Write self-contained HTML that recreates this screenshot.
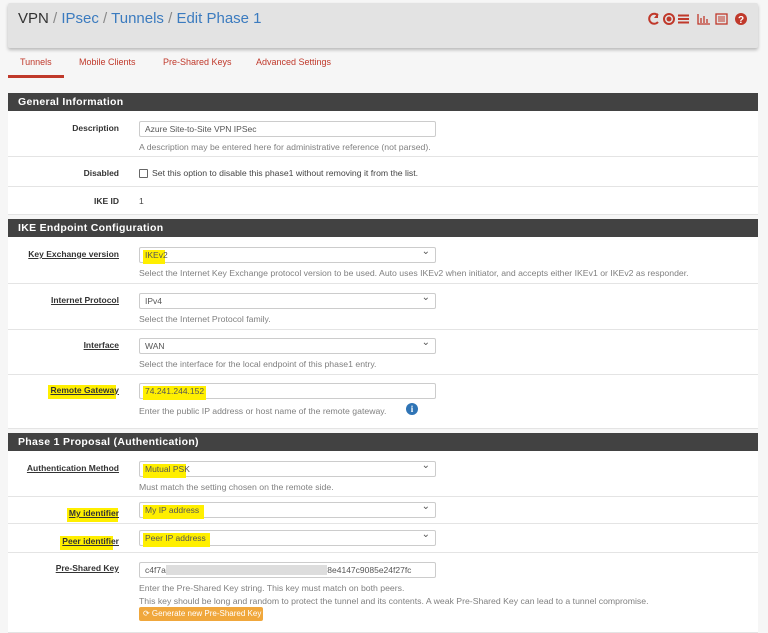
<!DOCTYPE html>
<html><head><meta charset="utf-8"><style>
*{box-sizing:border-box;margin:0;padding:0}
body{width:768px;height:622px;overflow:hidden;background:#f6f6f6;font-family:"Liberation Sans",sans-serif;position:relative;font-size:9px;color:#222}
.a{position:absolute}
.bar{left:8px;top:3px;width:750px;height:45px;background:#e3e3e3;box-shadow:0 2px 3px rgba(0,0,0,.25);border-radius:2px}
.bc{left:18px;top:10px;font-size:15px;color:#333;white-space:nowrap}
.bc span{color:#3b7bbf}
.tab{top:57px;font-size:9px;color:#c0392b}
.hdr{left:8px;width:750px;height:18px;background:#424242;color:#fff;font-weight:bold;font-size:10.5px;padding:3px 10px;letter-spacing:.3px}
.row{left:8px;width:750px;background:#fff;border-bottom:1px solid #e4e4e4}
.lb{right:649px;font-weight:bold;font-size:8.5px;color:#333;text-align:right;white-space:nowrap}
.lb.u{text-decoration:underline}
.in{left:139px;width:297px;height:16px;border:1px solid #ccc;border-radius:2px;background:#fff;font-size:8.5px;color:#555;padding:2px 5px;white-space:nowrap}
.in.s::after{content:"⌄";position:absolute;right:5px;top:-2px;font-size:10px;color:#555}
.h{left:139px;font-size:8.7px;color:#808080;white-space:nowrap}
.hl{background:#ffef00;box-shadow:0 2px 0 2px #ffef00}
</style></head><body>
<div class="a bar"></div>
<div class="a bc">VPN <span style="color:#888">/</span> <span>IPsec</span> <span style="color:#888">/</span> <span>Tunnels</span> <span style="color:#888">/</span> <span>Edit Phase 1</span></div>
<svg class="a" style="left:647px;top:11px" width="104" height="16" viewBox="0 0 104 16">
<g fill="none" stroke="#c0392b" stroke-width="2">
<path d="M11 4.5A5 5 0 1 0 11 11"/><circle cx="22" cy="8" r="5"/>
<path d="M31 4.5h11M31 8h11M31 11.5h11"/>
</g>
<path d="M11 2v5h-4z" fill="#c0392b"/>
<circle cx="22" cy="8" r="2.5" fill="#c0392b"/>
<path d="M51 3v10h12M54 12V7M57 12V5M60 12V8" fill="none" stroke="#c0392b" stroke-width="1.3"/>
<rect x="69" y="3" width="11" height="10" fill="none" stroke="#c0392b" stroke-width="1.3"/>
<path d="M71 6h7M71 8h7M71 10h7" stroke="#c0392b" stroke-width="1"/>
<circle cx="94" cy="8" r="6" fill="#c0392b"/>
<text x="94" y="12" font-size="10" font-weight="bold" fill="#fff" text-anchor="middle" font-family="Liberation Sans">?</text>
</svg>
<div class="a tab" style="left:20px">Tunnels</div>
<div class="a tab" style="left:79px">Mobile Clients</div>
<div class="a tab" style="left:163px">Pre-Shared Keys</div>
<div class="a tab" style="left:256px">Advanced Settings</div>
<div class="a" style="left:8px;top:75px;width:56px;height:3px;background:#c0392b"></div>

<div class="a hdr" style="top:93px">General Information</div>
<div class="a row" style="top:111px;height:46px"></div>
<div class="a lb" style="top:123px">Description</div>
<div class="a in" style="top:121px">Azure Site-to-Site VPN IPSec</div>
<div class="a h" style="top:142px">A description may be entered here for administrative reference (not parsed).</div>
<div class="a row" style="top:157px;height:30px"></div>
<div class="a lb" style="top:168px">Disabled</div>
<div class="a" style="left:139px;top:169px;width:9px;height:9px;border:1px solid #666;border-radius:1px"></div>
<div class="a" style="left:152px;top:168px;font-size:8.7px;color:#444">Set this option to disable this phase1 without removing it from the list.</div>
<div class="a row" style="top:187px;height:28px"></div>
<div class="a lb" style="top:196px">IKE ID</div>
<div class="a" style="left:139px;top:196px;font-size:8.5px;color:#444">1</div>

<div class="a hdr" style="top:219px">IKE Endpoint Configuration</div>
<div class="a row" style="top:237px;height:47px"></div>
<div class="a lb u" style="top:249px">Key Exchange version</div>
<div class="a in s" style="top:247px"><span class="hl">IKEv</span>2</div>
<div class="a h" style="top:268px">Select the Internet Key Exchange protocol version to be used. Auto uses IKEv2 when initiator, and accepts either IKEv1 or IKEv2 as responder.</div>
<div class="a row" style="top:284px;height:46px"></div>
<div class="a lb u" style="top:295px">Internet Protocol</div>
<div class="a in s" style="top:293px">IPv4</div>
<div class="a h" style="top:314px">Select the Internet Protocol family.</div>
<div class="a row" style="top:330px;height:45px"></div>
<div class="a lb u" style="top:340px">Interface</div>
<div class="a in s" style="top:338px">WAN</div>
<div class="a h" style="top:359px">Select the interface for the local endpoint of this phase1 entry.</div>
<div class="a row" style="top:375px;height:54px"></div>
<div class="a lb u" style="top:385px"><span class="hl">Remote Gatewa</span>y</div>
<div class="a in" style="top:383px"><span class="hl">74.241.244.152</span></div>
<div class="a h" style="top:406px">Enter the public IP address or host name of the remote gateway.</div>
<div class="a" style="left:406px;top:403px;width:12px;height:12px;border-radius:50%;background:#2f74b5;color:#fff;font-size:9px;font-weight:bold;text-align:center;line-height:12px;font-family:'Liberation Serif',serif">i</div>

<div class="a hdr" style="top:433px">Phase 1 Proposal (Authentication)</div>
<div class="a row" style="top:451px;height:46px"></div>
<div class="a lb u" style="top:463px">Authentication Method</div>
<div class="a in s" style="top:461px"><span class="hl">Mutual PS</span>K</div>
<div class="a h" style="top:482px">Must match the setting chosen on the remote side.</div>
<div class="a row" style="top:497px;height:27px"></div>
<div class="a lb u" style="top:508px"><span class="hl">My identifie</span>r</div>
<div class="a in s" style="top:502px"><span class="hl">My IP address&nbsp;</span></div>
<div class="a row" style="top:524px;height:29px"></div>
<div class="a lb u" style="top:536px"><span class="hl">Peer identifi</span>er</div>
<div class="a in s" style="top:530px"><span class="hl">Peer IP address&nbsp;</span></div>
<div class="a row" style="top:553px;height:80px"></div>
<div class="a lb u" style="top:563px">Pre-Shared Key</div>
<div class="a in" style="top:562px">c4f7a<span style="background:#ddd;color:#ddd">xxxxxxxxxxxxxxxxxxxxxxxxxxxxxxxxxxxxxx</span>8e4147c9085e24f27fc</div>
<div class="a h" style="top:583px">Enter the Pre-Shared Key string. This key must match on both peers.</div>
<div class="a h" style="top:596px">This key should be long and random to protect the tunnel and its contents. A weak Pre-Shared Key can lead to a tunnel compromise.</div>
<div class="a" style="left:139px;top:607px;width:124px;height:14px;background:#f0a73c;border-radius:2px;color:#fff;font-size:8px;padding:2px 4px;white-space:nowrap">⟳ Generate new Pre-Shared Key</div>
</body></html>
